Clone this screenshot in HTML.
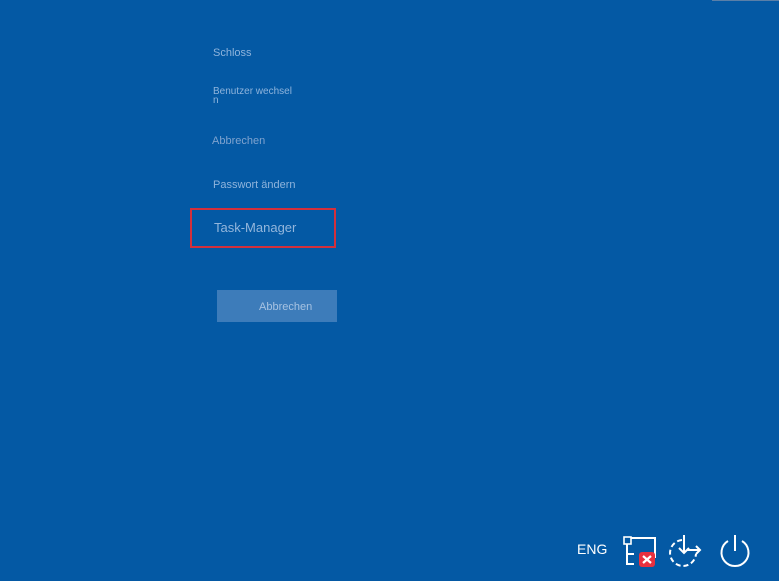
<!DOCTYPE html>
<html><head><meta charset="utf-8"><style>
html,body{margin:0;padding:0}
body{width:779px;height:581px;background:#0459a4;position:relative;overflow:hidden;font-family:"Liberation Sans",sans-serif}
.t{position:absolute;color:#8fb4dc;font-size:11px;white-space:nowrap}
</style></head><body>
<div style="position:absolute;left:712px;top:0;width:67px;height:1px;background:#5a7fa8"></div>
<div class="t" style="left:213px;top:47px">Schloss</div>
<div class="t" style="left:213px;top:87px;font-size:10px;line-height:9px">Benutzer wechsel<br>n</div>
<div class="t" style="left:212px;top:135px;color:#7fa3cf">Abbrechen</div>
<div class="t" style="left:213px;top:179px">Passwort ändern</div>
<div style="position:absolute;left:190px;top:208px;width:146px;height:40px;border:2px solid #d4303c;box-sizing:border-box"></div>
<div class="t" style="left:214px;top:220px;font-size:13px;color:#93b6dc">Task-Manager</div>
<div style="position:absolute;left:217px;top:290px;width:120px;height:32px;background:#3d7cba"></div>
<div class="t" style="left:259px;top:301px;color:#a7c3e2">Abbrechen</div>
<div style="position:absolute;left:577px;top:541px;color:#fff;font-size:14px">ENG</div>
<svg style="position:absolute;left:620px;top:530px" width="140" height="40" viewBox="0 0 140 40" fill="none" stroke="#fff" stroke-width="2">
<rect x="4" y="7" width="7" height="7" stroke-width="1.6"/>
<path d="M11 8H35V28M7 14V34H14M7 24H14"/>
<rect x="19" y="22" width="16" height="15" rx="3" fill="#e8313f" stroke="none"/>
<path d="M23 26L31 33M31 26L23 33" stroke-width="2.2"/>
<path d="M62 10A13 13 0 1 0 76 24" stroke-dasharray="5 3"/>
<path d="M64 5V23M59 18L64 23L69 18M67 20H80M76 16L80 20L76 24"/>
<path d="M115 5V21"/>
<path d="M108 11A13.5 13.5 0 1 0 122 11"/>
</svg>
</body></html>
